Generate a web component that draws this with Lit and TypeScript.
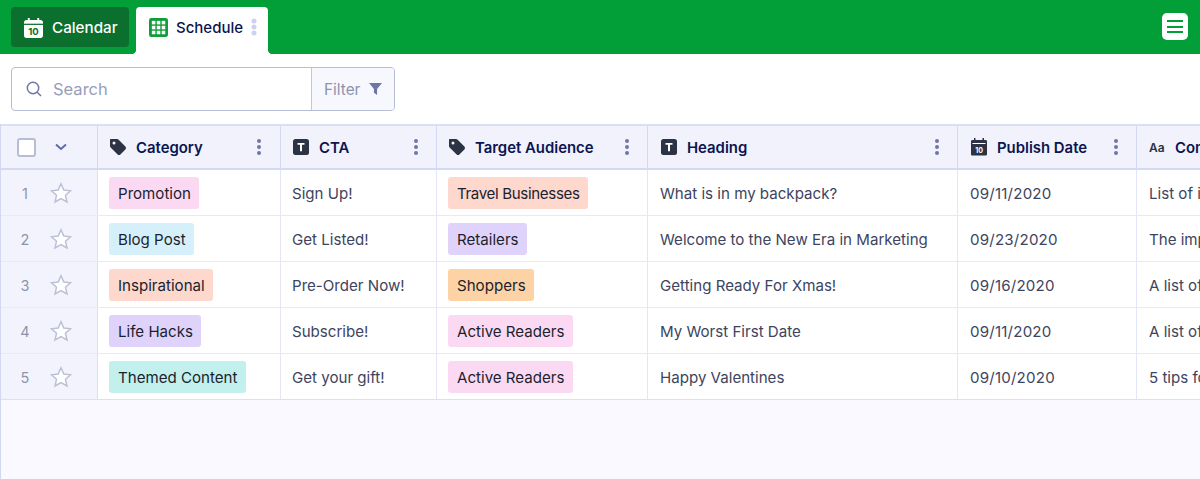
import { LitElement, html, css, svg } from "lit";
import { customElement } from "lit/decorators.js";

const tag = svg`<svg class="hi" viewBox="0 0 18 18"><path fill="#2c3345" fill-rule="evenodd" d="M2 1h6c.5 0 1 .2 1.400.6l7 7c.8.8.8 2 0 2.800l-5 5c-.8.8-2 .8-2.800 0l-7-7C1.200 9 1 8.500 1 8V2c0-.6.400-1 1-1zm3 2.500a1.500 1.500 0 1 0 0 3 1.500 1.500 0 0 0 0-3z"/></svg>`;
const tIcon = svg`<svg class="hi" viewBox="0 0 18 18"><rect x="1" y="1" width="16" height="16" rx="2.500" fill="#2c3345"/><path d="M5.500 5h7v1.800h-2.500v6.400H8V6.800H5.500z" fill="#fff"/></svg>`;
const calDark = svg`<svg class="hi" viewBox="0 0 18 18"><path fill="#2c3345" d="M4 0h1.500v2h7V0H14v2h1.500c1 0 1.500.6 1.500 1.500V16c0 1-.6 1.500-1.500 1.500h-13C1.500 17.500 1 17 1 16V3.500C1 2.600 1.500 2 2.500 2H4z"/><rect x="2.500" y="5" width="13" height="1" fill="#fff"/><text x="9" y="15" text-anchor="middle" class="cal" fill="#fff">10</text></svg>`;
const aa = svg`<svg class="hi" viewBox="0 0 18 18"><text x="0" y="14" class="aa" fill="#2c3345">Aa</text></svg>`;
const dots = html`<svg class="dots" viewBox="0 0 6 18"><circle cx="3" cy="3" r="2"/><circle cx="3" cy="9" r="2"/><circle cx="3" cy="15" r="2"/></svg>`;
const star = html`<svg class="star" viewBox="0 0 22 22"><path d="M11 1.800l2.800 6.300 6.800.7-5.100 4.500 1.500 6.700-6-3.500-6 3.500 1.500-6.700L1.400 8.800l6.800-.7z"/></svg>`;

const P = "#fcd9f3", B = "#d5effb", O = "#fed8cc", V = "#e0d3fb", A = "#fdd2a4", T = "#c2f0ec";
const rows: [string, string, string, string, string, string, string, string][] = [
  ["Promotion", P, "Sign Up!", "Travel Businesses", O, "What is in my backpack?", "09/11/2020", "List of i"],
  ["Blog Post", B, "Get Listed!", "Retailers", V, "Welcome to the New Era in Marketing", "09/23/2020", "The imp"],
  ["Inspirational", O, "Pre-Order Now!", "Shoppers", A, "Getting Ready For Xmas!", "09/16/2020", "A list of"],
  ["Life Hacks", V, "Subscribe!", "Active Readers", P, "My Worst First Date", "09/11/2020", "A list of"],
  ["Themed Content", T, "Get your gift!", "Active Readers", P, "Happy Valentines", "09/10/2020", "5 tips fo"],
];
const heads: [unknown, string][] = [
  [tag, "Category"], [tIcon, "CTA"], [tag, "Target Audience"], [tIcon, "Heading"], [calDark, "Publish Date"], [aa, "Content"],
];

@customElement("app-root")
export class AppRoot extends LitElement {
  static styles = css`
    :host { display: flex; flex-direction: column; width: 1200px; height: 479px; overflow: hidden; background: #fff; font-family: "Inter", "Liberation Sans", sans-serif; }
    .top { height: 54px; background: #029e38; display: flex; align-items: flex-end; padding: 7px 12px 0 11px; box-sizing: border-box; flex: none; }
    .tab { height: 40px; width: 118px; align-self: flex-start; border-radius: 4px; background: #0b6f2d; color: #fff; display: flex; align-items: center; gap: 9px; padding-left: 13px; box-sizing: border-box; font-size: 15.200px; font-weight: 500; }
    .tab svg { width: 19px; height: 21px; flex: none; }
    .active { position: relative; height: 47px; width: 132px; margin-left: 7px; background: #fff; color: #0a1551; border-radius: 4px 4px 0 0; padding: 0 0 7px 13px; gap: 8px; font-size: 15px; }
    .active::before, .active::after { content: ""; position: absolute; bottom: 0; width: 5px; height: 5px; }
    .active::before { left: -5px; background: radial-gradient(circle at 0 0, #029e38 5px, #fff 5.500px); }
    .active::after { right: -5px; background: radial-gradient(circle at 100% 0, #029e38 5px, #fff 5.500px); }
    .tab svg.tabdots { width: 6px; height: 18px; fill: #cdd1f0; }
    .spacer { flex: 1; }
    .menu { align-self: flex-start; margin-top: 6px; width: 26px; height: 27px; border-radius: 5px; background: #fff; display: flex; flex-direction: column; justify-content: center; align-items: center; gap: 3.500px; }
    .menu i { width: 16px; height: 2px; background: #029e38; display: block; }

    .bar { flex: none; padding: 13px 0 13px 11px; display: flex; }
    .search { width: 384px; height: 44px; display: flex; border: 1px solid #b8bdd6; border-radius: 4px; box-sizing: border-box; overflow: hidden; }
    .input { flex: 1; display: flex; align-items: center; gap: 11px; padding-left: 14px; color: #979db8; font-size: 16.500px; }
    .input svg { width: 16px; height: 16px; fill: none; stroke: #6f76a7; stroke-width: 1.500; flex: none; }
    .filter { width: 83px; background: #f7f8fe; border-left: 1px solid #c3c7de; display: flex; align-items: center; gap: 9px; padding-left: 12px; box-sizing: border-box; font-size: 15.400px; color: #8d93ad; }
    .filter svg { width: 13px; height: 12px; fill: #6f76a7; }

    .table { flex: 1; background: #f9f9ff; border-left: 1px solid #d3d7f2; min-height: 0; }
    .row { display: grid; grid-template-columns: 97px 183px 156px 211px 310px 179px 63px; }
    .head { height: 46px; background: #f1f2fc; border-top: 2px solid #dcdff5; border-bottom: 2px solid #d5d8f2; box-sizing: border-box; }
    .hc { border-right: 1px solid #d5d8f2; display: flex; align-items: center; padding: 0 12px; gap: 9px; color: #0a1551; font-size: 14.900px; font-weight: 600; white-space: nowrap; overflow: hidden; box-sizing: border-box; }
    .hc:nth-child(2), .hc:nth-child(3), .hc:nth-child(4) { padding-left: 11px; }
    .hc:nth-child(7) { border-right: 0; gap: 8px; }
    .hc span { flex: 1; padding-top: 1px; }
    .hi { width: 18px; height: 18px; flex: none; }
    .cal { font: 700 7px "Inter", sans-serif; }
    .aa { font: 600 12px "Inter", sans-serif; }
    .dots { width: 6px; height: 18px; flex: none; fill: #6f76a7; margin-right: 5px; }
    .hc:nth-child(2) .dots { margin-right: 6px; }
    .sel { padding: 0 0 0 16px; gap: 0; }
    .check { width: 19px; height: 19px; box-sizing: border-box; background: #fff; border: 2px solid #b8bdd6; border-radius: 3px; flex: none; }
    .chev { width: 12px; height: 8px; margin-left: 19px; fill: none; stroke: #5c6bae; stroke-width: 2; flex: none; }

    .data { height: 46px; background: #fff; border-bottom: 1px solid #e8e9f8; box-sizing: border-box; }
    .data:last-child { border-bottom: 1px solid #dcdff5; }
    .c { border-right: 1px solid #e3e5f8; display: flex; align-items: center; padding: 2px 11px 0 12px; color: #3d4460; font-size: 15.100px; white-space: nowrap; overflow: hidden; box-sizing: border-box; }
    .c:last-child { border-right: 0; }
    .ctc { padding-left: 11px; }
    .date { letter-spacing: .2px; }
    .pc { padding: 0 11px; }
    .idx { background: #f3f3fd; border-right-color: #dcdff5; padding: 0; color: #8d93ad; font-size: 14.500px; }
    .idx b { font-weight: 400; width: 48px; text-align: center; margin-right: 1px; padding-top: 2px; }
    .star { width: 22px; height: 22px; fill: #fff; stroke: #bcc0d4; stroke-width: 1.500; flex: none; }
    .pill { padding: 0 8.500px 0 9px; height: 32px; line-height: 34px; border-radius: 3px; color: #1b1f2e; }
    .tight { letter-spacing: -.35px; }
  `;
  render() {
    return html`
      <div class="top">
        <div class="tab">
          <svg viewBox="0 0 20 22"><path fill="#fff" d="M4 1h2v2h8V1h2v2h1.500C19 3 20 4 20 5.500v14c0 1.500-1 2.500-2.500 2.500h-15C1 22 0 21 0 19.500v-14C0 4 1 3 2.500 3H4z"/><rect y="7" width="20" height="1.300" fill="#0b6f2d"/><text x="10" y="19" text-anchor="middle" fill="#0b6f2d" style="font:700 10px Inter,sans-serif">10</text></svg>
          Calendar
        </div>
        <div class="tab active">
          <svg viewBox="0 0 20 20"><rect width="20" height="20" rx="2.500" fill="#109e3a"/><g fill="#fff"><rect x="3" y="3" width="3.700" height="3.700"/><rect x="8.200" y="3" width="3.700" height="3.700"/><rect x="13.400" y="3" width="3.700" height="3.700"/><rect x="3" y="8.200" width="3.700" height="3.700"/><rect x="8.200" y="8.200" width="3.700" height="3.700"/><rect x="13.400" y="8.200" width="3.700" height="3.700"/><rect x="3" y="13.400" width="3.700" height="3.700"/><rect x="8.200" y="13.400" width="3.700" height="3.700"/><rect x="13.400" y="13.400" width="3.700" height="3.700"/></g></svg>
          Schedule
          <svg class="tabdots" viewBox="0 0 6 18"><circle cx="3" cy="3" r="2.500"/><circle cx="3" cy="9" r="2.500"/><circle cx="3" cy="15" r="2.500"/></svg>
        </div>
        <div class="spacer"></div>
        <div class="menu"><i></i><i></i><i></i></div>
      </div>
      <div class="bar">
        <div class="search">
          <div class="input"><svg viewBox="0 0 16 16"><circle cx="7" cy="7" r="5.700"/><path d="M11.200 11.200L15 15"/></svg>Search</div>
          <div class="filter">Filter <svg viewBox="0 0 14 13"><path d="M0 0h14L8.700 6.500V13L5.300 10.500V6.500z"/></svg></div>
        </div>
      </div>
      <div class="table">
        <div class="row head">
          <div class="hc sel"><div class="check"></div><svg class="chev" viewBox="0 0 12 8"><path d="M1 1.500l5 4.500 5-4.500"/></svg></div>
          ${heads.map(([i, t]) => html`<div class="hc">${i}<span>${t}</span>${dots}</div>`)}
        </div>
        ${rows.map((r, i) => html`
          <div class="row data">
            <div class="c idx"><b>${i + 1}</b>${star}</div>
            <div class="c pc"><div class="pill" style="background:${r[1]}">${r[0]}</div></div>
            <div class="c ctc">${r[2]}</div>
            <div class="c pc"><div class="pill ${r[3] === "Travel Businesses" ? "tight" : ""}" style="background:${r[4]}">${r[3]}</div></div>
            <div class="c">${r[5]}</div>
            <div class="c date">${r[6]}</div>
            <div class="c">${r[7]}</div>
          </div>`)}
      </div>
    `;
  }
}
